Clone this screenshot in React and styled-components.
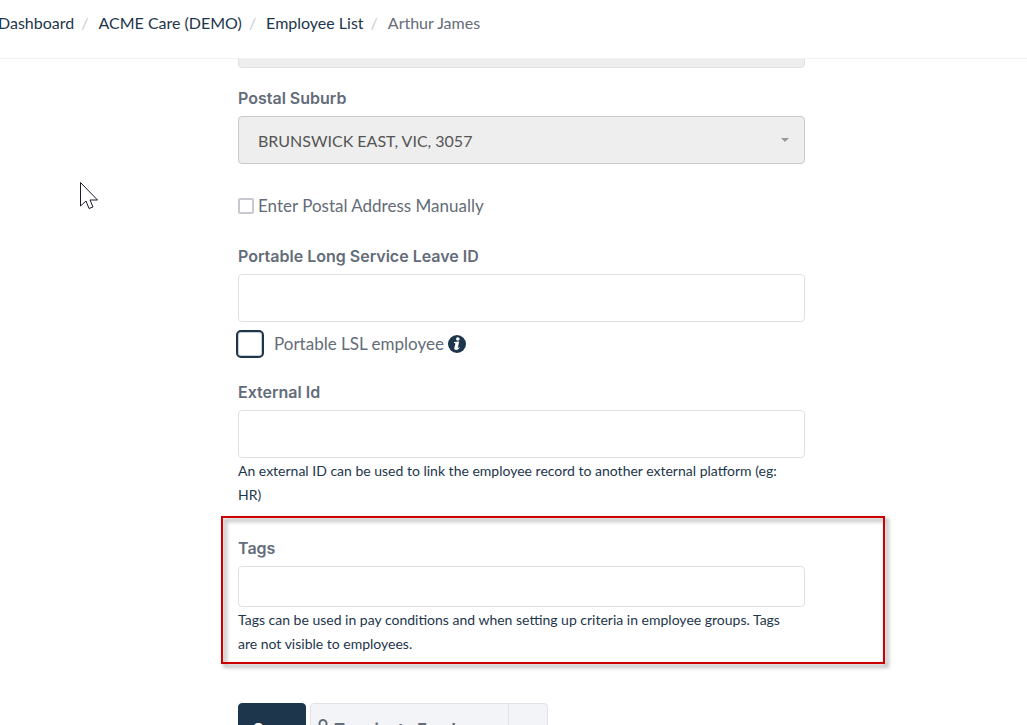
import React, { useState } from 'react';
import styled, { createGlobalStyle } from 'styled-components';

const headingFont = 'Inter, "Liberation Sans", sans-serif';

const GlobalStyle = createGlobalStyle`
    *, *::before, *::after {
        box-sizing: border-box;
    }
    body {
        margin: 0;
        background: #fff;
        color: #1d364b;
        font-family: Lato, "Liberation Sans", sans-serif;
        font-size: 16px;
        line-height: 24px;
    }
    input, select, button {
        font: inherit;
    }
`

const Page = styled.div`
    position: relative;
    display: flex;
    flex-direction: column;
    height: 100vh;
    overflow: hidden;
`

const Header = styled.header`
    flex-shrink: 0;
    padding: 11px 0 23px;
    border-bottom: 1px solid #f1f2f4;
`

const Breadcrumb = styled.ol`
    display: flex;
    margin: 0 0 0 -2px;
    padding: 0;
    list-style: none;
    white-space: nowrap;
    & li + li::before {
        content: "/";
        padding: 0 10px 0 7px;
        color: #ccc;
    }
    & li {
        color: #636c78;
    }
    & a {
        color: #1d364b;
        text-decoration: none;
    }
`

const Content = styled.main`
    display: grid;
    grid-template-columns: 238px minmax(0, 1fr) 222px;
    flex: 1;
    min-height: 0;
    overflow: hidden;
`

const Form = styled.form`
    grid-column: 2;
    margin-top: -39px;
`

const Field = styled.div`
    position: relative;
    display: flex;
    flex-direction: column;
    margin-bottom: ${props => props.$gap || 0}px;
`

const Label = styled.label`
    margin-bottom: 6px;
    color: #636c78;
    font-family: ${headingFont};
    font-weight: 600;
`

const TextInput = styled.input`
    width: 100%;
    height: ${props => props.$short ? 41 : 48}px;
    padding: 0 19px;
    border: 1px solid #dce1e5;
    border-radius: 4px;
    background: #fff;
    color: #555;
    outline: none;
    &:disabled {
        background: #eee;
    }
`

const SelectBox = styled.div`
    display: grid;
    align-items: center;
    & > * {
        grid-area: 1 / 1;
    }
`

const Select = styled.select`
    width: 100%;
    height: 48px;
    padding: 2px 40px 0 19px;
    border: 1px solid #c8c9ca;
    border-radius: 4px;
    background: #eee;
    color: #555;
    opacity: 1;
    appearance: none;
`

const Caret = styled.span`
    justify-self: end;
    margin-right: ${props => props.$inset || 0}px;
    border: 4px solid transparent;
    border-top-color: #999;
    border-bottom: 0;
    pointer-events: none;
`

const CheckRow = styled.div`
    display: flex;
    align-items: center;
    gap: ${props => props.$gap}px;
    margin: ${props => props.$margin};
    color: #636c78;
    font-size: 17px;
`

const Check = styled.input`
    flex-shrink: 0;
    width: 16px;
    height: 16px;
    margin: 0;
    border: 2px solid #c8c9d0;
    border-radius: 2px;
    background: #fff;
    appearance: none;
    &:checked {
        background: #1d364b;
    }
`

const LargeCheck = styled(Check)`
    width: 28px;
    height: 28px;
    margin-left: -2px;
    border-color: #1d364b;
    border-radius: 5px;
    box-shadow: inset 0 0 0 1px #c9ced4;
`

const InfoButton = styled.button`
    display: flex;
    margin-left: -6px;
    padding: 0;
    border: 0;
    background: none;
`

const Help = styled.p`
    margin: 1px 0 0;
    padding-right: 12px;
    font-size: 14px;
`

// red frame drawn over the tags section
const Highlight = styled.div`
    position: absolute;
    top: -20px;
    right: -80px;
    bottom: -8px;
    left: -17px;
    border: 2px solid #c00;
    filter: drop-shadow(3px 3px 2px rgba(0, 0, 0, .45));
    pointer-events: none;
`

const Actions = styled.div`
    display: flex;
    gap: 4px;
`

const Button = styled.button`
    display: flex;
    align-items: center;
    justify-content: center;
    gap: 6px;
    height: 48px;
    padding: 4px 14px 0;
    border: 1px solid #1d364b;
    border-radius: 4px;
    background: #1d364b;
    color: #fff;
    font-family: ${headingFont};
    font-weight: 700;
`

const SplitButton = styled.div`
    display: flex;
    & ${Button} {
        border-color: #dfe3e8;
        background: #f3f4f7;
        color: #636c78;
    }
    & ${Button}:first-child {
        padding: 4px 14px 0 7px;
        border-radius: 4px 0 0 4px;
    }
    & ${Button}:last-child {
        margin-left: -1px;
        padding: 0 15px;
        border-radius: 0 4px 4px 0;
    }
`

const Pointer = styled.svg`
    position: absolute;
    top: 181px;
    left: 79px;
    pointer-events: none;
`

function InfoIcon() {
    return (
        <svg width="18" height="18" viewBox="0 0 18 18" aria-hidden="true">
            <circle cx="9" cy="9" r="9" fill="#1d364b" />
            <circle cx="9.8" cy="4" r="1.8" fill="#fff" />
            <path d="M6 7 11.2 6.5 9.9 12.2Q9.8 13.2 10.3 12.9L11.2 12.1L11.7 12.6Q10.2 15.1 8.1 15.1Q5.9 15.1 6.4 12.6L7.4 8.7Q7.5 8 6 8Z" fill="#fff" />
        </svg>
    )
}

function LockIcon() {
    return (
        <svg width="10" height="20" viewBox="0 0 10 20" fill="none" stroke="#636c78" strokeWidth="2" aria-hidden="true">
            <path d="M1.5 9V4.5a3.5 3.5 0 0 1 7 0V9" />
            <path d="M0 9h10v7H0z" fill="#636c78" stroke="none" />
        </svg>
    )
}

const crumbs = ['Dashboard', 'ACME Care (DEMO)', 'Employee List'];

function App() {
    const [manual, setManual] = useState(false);
    const [portable, setPortable] = useState(false);

    return (
        <Page>
            <GlobalStyle />
            <Header>
                <nav aria-label="Breadcrumb">
                    <Breadcrumb>
                        {crumbs.map(name => <li key={name}><a href="#">{name}</a></li>)}
                        <li>Arthur James</li>
                    </Breadcrumb>
                </nav>
            </Header>

            <Content>
                <Form onSubmit={e => e.preventDefault()}>
                    <Field $gap={18}>
                        <TextInput aria-label="Postal Address" disabled />
                    </Field>

                    <Field>
                        <Label htmlFor="suburb">Postal Suburb</Label>
                        <SelectBox>
                            <Select id="suburb" disabled>
                                <option>BRUNSWICK EAST, VIC, 3057</option>
                            </Select>
                            <Caret $inset={16} />
                        </SelectBox>
                    </Field>

                    <CheckRow $gap={4} $margin="30px 0 26px">
                        <Check id="manual" type="checkbox" checked={manual} onChange={e => setManual(e.target.checked)} />
                        <label htmlFor="manual">Enter Postal Address Manually</label>
                    </CheckRow>

                    <Field>
                        <Label htmlFor="lsl">Portable Long Service Leave ID</Label>
                        <TextInput id="lsl" type="text" />
                    </Field>

                    <CheckRow $gap={10} $margin="8px 0 22px">
                        <LargeCheck id="portable" type="checkbox" checked={portable} onChange={e => setPortable(e.target.checked)} />
                        <label htmlFor="portable">Portable LSL employee</label>
                        <InfoButton type="button" aria-label="About portable LSL"><InfoIcon /></InfoButton>
                    </CheckRow>

                    <Field $gap={29}>
                        <Label htmlFor="external">External Id</Label>
                        <TextInput id="external" type="text" />
                        <Help>An external ID can be used to link the employee record to another external platform (eg: HR)</Help>
                    </Field>

                    <Field $gap={47}>
                        <Label htmlFor="tags">Tags</Label>
                        <TextInput id="tags" type="text" $short />
                        <Help>Tags can be used in pay conditions and when setting up criteria in employee groups. Tags are not visible to employees.</Help>
                        <Highlight />
                    </Field>

                    <Actions>
                        <Button type="submit">Save</Button>
                        <SplitButton>
                            <Button type="button"><LockIcon />Terminate Employee</Button>
                            <Button type="button" aria-label="More actions"><Caret /></Button>
                        </SplitButton>
                    </Actions>
                </Form>
            </Content>

            <Pointer width="20" height="30" viewBox="0 0 20 30" aria-hidden="true">
                <path d="M1.5 1.5V25L7 20L10 27.5L14 26L11 19H18.5Z" fill="#fff" stroke="#1a1a2b" />
            </Pointer>
        </Page>
    )
}

export default App;
